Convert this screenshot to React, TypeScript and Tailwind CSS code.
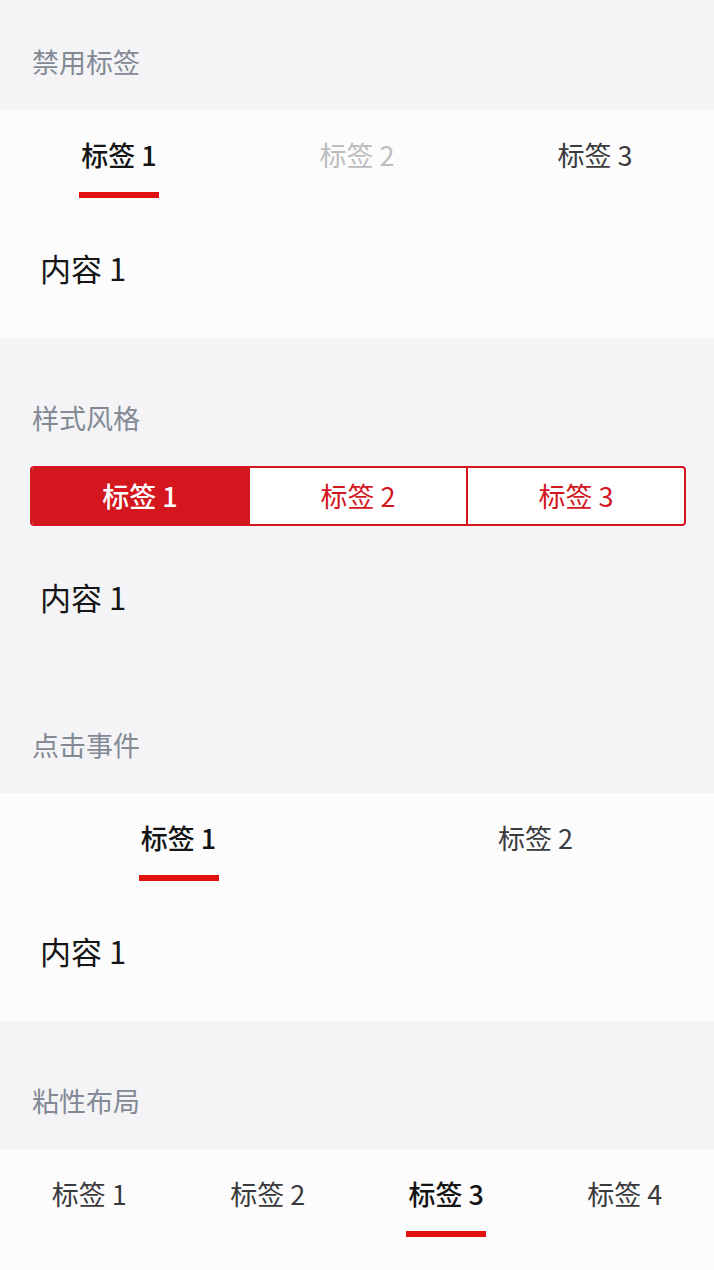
import React from "react";

const font = { fontFamily: '"Noto Sans CJK SC", "Noto Sans", sans-serif' };

function Title({ children, first }: { children: React.ReactNode; first?: boolean }) {
    return (
        <div className={`${first ? "pt-[44px]" : "pt-[62px]"} pb-[30px] px-[32px]`}>
            <p className="text-[27px] leading-[36px] text-[#838a95]">{children}</p>
        </div>
    );
}

type Tab = { label: string; active?: boolean; disabled?: boolean };

function TabBar({ tabs }: { tabs: Tab[] }) {
    return (
        <div className="flex h-[92px]">
            {tabs.map((t) => (
                <div key={t.label} className="relative flex-1 flex items-center justify-center">
                    <span
                        className={`text-[27px] leading-[36px] -mt-[2px] ${
                            t.active
                                ? "text-[#141414] font-medium"
                                : t.disabled
                                ? "text-[#bcbcbf]"
                                : "text-[#3a3a3c]"
                        }`}
                    >
                        {t.label}
                    </span>
                    {t.active && (
                        <div className="absolute bottom-[4px] left-1/2 -translate-x-1/2 w-[80px] h-[6px] bg-[#e0110e]" />
                    )}
                </div>
            ))}
        </div>
    );
}

function Content() {
    return (
        <div className="pt-[46px] pb-[50px] px-[40px]">
            <p className="text-[31px] leading-[40px] text-[#161616]">内容 1</p>
        </div>
    );
}

export default function App() {
    return (
        <div className="min-h-screen w-full bg-[#f4f4f6] overflow-hidden" style={font}>
            <Title first>禁用标签</Title>
            <div className="bg-[#fdfcfd]">
                <TabBar tabs={[{ label: "标签 1", active: true }, { label: "标签 2", disabled: true }, { label: "标签 3" }]} />
                <Content />
            </div>

            <Title>样式风格</Title>
            <div className="ml-[30px] mr-[28px] flex h-[60px] rounded-[4px] border-2 border-[#d4161e] bg-white overflow-hidden">
                <div className="flex-1 flex items-center justify-center bg-[#d4161e] text-white text-[27px] font-medium">标签 1</div>
                <div className="flex-1 flex items-center justify-center border-x-2 border-[#d4161e] text-[#d4161e] text-[27px]">标签 2</div>
                <div className="flex-1 flex items-center justify-center text-[#d4161e] text-[27px]">标签 3</div>
            </div>
            <div className="pt-[51px] pb-[48px] px-[40px]">
                <p className="text-[31px] leading-[40px] text-[#161616]">内容 1</p>
            </div>

            <Title>点击事件</Title>
            <div className="bg-[#fdfcfd]">
                <TabBar tabs={[{ label: "标签 1", active: true }, { label: "标签 2" }]} />
                <Content />
            </div>

            <Title>粘性布局</Title>
            <div className="bg-[#fdfcfd] h-[121px]">
                <TabBar tabs={[{ label: "标签 1" }, { label: "标签 2" }, { label: "标签 3", active: true }, { label: "标签 4" }]} />
            </div>
        </div>
    );
}
